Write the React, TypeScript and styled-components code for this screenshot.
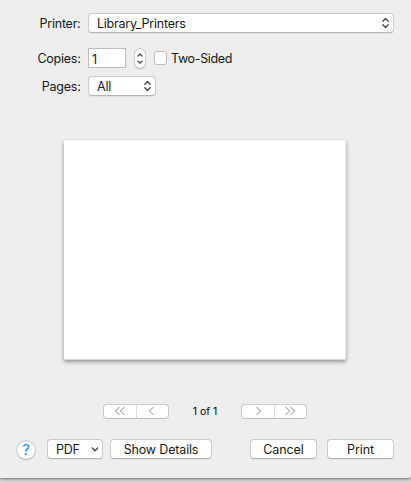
import React from 'react';
import styled, { createGlobalStyle } from 'styled-components';

const GlobalStyle = createGlobalStyle`
  * { box-sizing: border-box; }
  body { margin: 0; background: #d2d2d2; overflow: hidden; }
`;

const Backdrop = styled.div`
  height: 483px;
  background: #d6d6d6;
`;

const Dialog = styled.main`
  width: 411px;
  height: 478px;
  background: #eeeeee;
  border-radius: 0 0 3px 1px;
  box-shadow: 0 1px 3px rgba(0, 0, 0, 0.5);
  padding-top: 13px;
  display: flex;
  flex-direction: column;
  font: 12.5px/20px Inter, 'Liberation Sans', sans-serif;
  letter-spacing: -0.24px;
  color: #181818;
`;

const Row = styled.div<{ $gap: number }>`
  display: flex;
  align-items: center;
  height: 20px;
  margin-bottom: ${(p) => p.$gap}px;
`;

const Label = styled.label`
  width: 80.5px;
  margin-right: 7.5px;
  padding-top: 2px;
  text-align: right;
  white-space: nowrap;
`;

const Caption = styled.span<{ $spacing?: number }>`
  padding-top: 2px;
  letter-spacing: ${(p) => p.$spacing ?? -0.24}px;
`;

const Button = styled.button<{ $width: number; $left?: number }>`
  width: ${(p) => p.$width}px;
  height: 20px;
  margin: 0 0 0 ${(p) => p.$left ?? 0}px;
  padding: 0;
  display: flex;
  align-items: center;
  justify-content: center;
  font: inherit;
  letter-spacing: inherit;
  color: inherit;
  white-space: nowrap;
  background: #fff;
  border: 1px solid #cbcbcb;
  border-bottom-color: #b5b5b5;
  border-radius: 4px;
  box-shadow: 0 0.5px 0.5px rgba(0, 0, 0, 0.1);
`;

const Popup = styled(Button)<{ $end?: number }>`
  justify-content: space-between;
  padding: 0 ${(p) => p.$end ?? 3}px 0 8px;
`;

const CopiesInput = styled.input`
  width: 38px;
  height: 20px;
  padding: 3px 0 0 3px;
  font: inherit;
  line-height: 16px;
  color: inherit;
  background: #fff;
  border: 1px solid #bebebe;
  border-radius: 0;
  outline: none;
`;

const Stepper = styled(Button)`
  height: 21px;
  border-radius: 6px;
`;

const Checkbox = styled.span`
  width: 13px;
  height: 14px;
  margin: 0 4px 0 8px;
  background: #fff;
  border: 1px solid #bdbdbd;
  border-radius: 3px;
`;

const Preview = styled.section`
  width: 282px;
  height: 220px;
  margin: 0 0 43px 64px;
  background: #fff;
  border: 1px solid #f8f8f8;
  border-left-color: #fff;
  border-right-color: #f0f0f0;
  border-bottom-color: #d4d4d4;
  box-shadow: 0 2px 4px rgba(0, 0, 0, 0.38);
`;

const Pager = styled.nav`
  display: flex;
  align-items: center;
  height: 16px;
  margin: 0 0 20px 103px;
`;

const PagerGroup = styled.div`
  width: 66px;
  height: 15px;
  display: flex;
  background: #fff;
  border: 1px solid #cccccc;
  border-bottom-color: #bcbcbc;
  border-radius: 4px;
`;

const PagerButton = styled.button`
  flex: 1;
  padding: 0;
  border: 0;
  background: none;
  display: flex;
  align-items: center;
  justify-content: center;
  & + & { border-left: 1px solid #dcdcdc; }
`;

const PageCount = styled.span`
  width: 72px;
  padding-top: 2px;
  text-align: center;
  font-size: 10.5px;
  letter-spacing: 0;
  color: #080808;
`;

const Help = styled(Button)`
  position: relative;
  top: 1px;
  border-radius: 50%;
  font-size: 15px;
  color: #1989ff;
`;

const Actions = styled.footer`
  display: flex;
  align-items: center;
  height: 20px;
`;

const Icon = styled.svg<{ $color: string; $weight: number }>`
  display: block;
  flex: none;
  fill: none;
  stroke: ${(p) => p.$color};
  stroke-width: ${(p) => p.$weight};
  stroke-linecap: round;
  stroke-linejoin: round;
`;

const UpDown = () => (
  <Icon width="9" height="12" viewBox="0 0 9 12" $color="#484848" $weight={1.4}>
    <path d="M1.8 4.2 4.5 1.5 7.2 4.2M1.8 7.8 4.5 10.5 7.2 7.8" />
  </Icon>
);

const StepIcon = () => (
  <Icon width="8" height="13" viewBox="0 0 8 13" $color="#484848" $weight={1.4}>
    <path d="M2 4 4 2.1 6 4M2 9.2 4 11.1 6 9.2" />
  </Icon>
);

const Down = () => (
  <Icon width="8" height="6" viewBox="0 0 8 6" $color="#444" $weight={1.4}>
    <path d="M1.3 2 4 4.7 6.7 2" />
  </Icon>
);

const PagerIcon = ({ d }: { d: string }) => (
  <Icon width="12" height="10" viewBox="0 0 12 10" $color="#b8b8b8" $weight={1.2}>
    <path d={d} />
  </Icon>
);

export default function App() {
  return (
    <Backdrop>
      <GlobalStyle />
      <Dialog>
        <Row $gap={15}>
          <Label>Printer:</Label>
          <Popup $width={306}><Caption>Library_Printers</Caption><UpDown /></Popup>
        </Row>
        <Row $gap={8}>
          <Label>Copies:</Label>
          <CopiesInput defaultValue="1" aria-label="Copies" />
          <Stepper $width={12} $left={8} aria-label="Change copies"><StepIcon /></Stepper>
          <Checkbox role="checkbox" aria-checked="false" />
          <Caption $spacing={-0.34}>Two-Sided</Caption>
        </Row>
        <Row $gap={44}>
          <Label>Pages:</Label>
          <Popup $width={68}><Caption>All</Caption><UpDown /></Popup>
        </Row>
        <Preview />
        <Pager>
          <PagerGroup>
            <PagerButton aria-label="First page"><PagerIcon d="M5.2 1.5 1.3 5 5.2 8.5M10.2 1.5 6.3 5 10.2 8.5" /></PagerButton>
            <PagerButton aria-label="Previous page"><PagerIcon d="M7.2 1.5 3.3 5 7.2 8.5" /></PagerButton>
          </PagerGroup>
          <PageCount>1 of 1</PageCount>
          <PagerGroup>
            <PagerButton aria-label="Next page"><PagerIcon d="M4.8 1.5 8.7 5 4.8 8.5" /></PagerButton>
            <PagerButton aria-label="Last page"><PagerIcon d="M1.8 1.5 5.7 5 1.8 8.5M6.8 1.5 10.7 5 6.8 8.5" /></PagerButton>
          </PagerGroup>
        </Pager>
        <Actions>
          <Help $width={20} $left={16}>?</Help>
          <Popup $width={56} $left={11} $end={3}><Caption>PDF</Caption><Down /></Popup>
          <Button $width={102} $left={7}><Caption $spacing={-0.16}>Show Details</Caption></Button>
          <Button $width={67} $left={38}><Caption $spacing={-0.12}>Cancel</Caption></Button>
          <Button $width={67} $left={10}><Caption $spacing={-0.1}>Print</Caption></Button>
        </Actions>
      </Dialog>
    </Backdrop>
  );
}
